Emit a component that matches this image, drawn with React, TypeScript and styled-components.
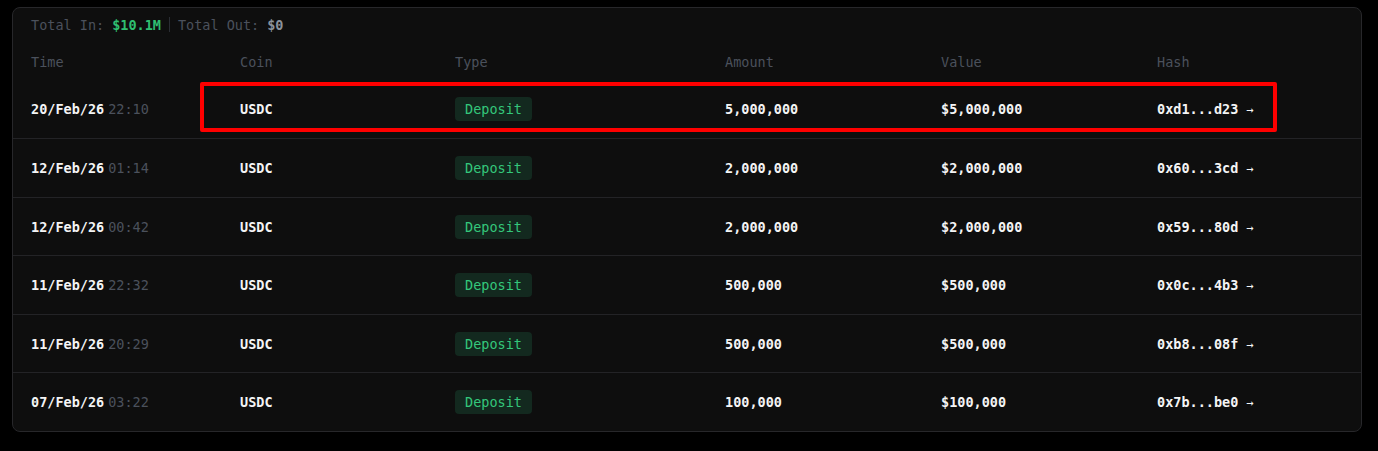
import React from "react";
import styled, { createGlobalStyle } from "styled-components";

const Global = createGlobalStyle`
  html, body { margin: 0; padding: 0; background: #000; }
  body { font-family: "DejaVu Sans Mono", "Liberation Mono", monospace; }
`;

const Page = styled.div`
  padding: 7px 16px 0 12px;
  width: 1378px;
  box-sizing: border-box;
`;

const Card = styled.div`
  position: relative;
  background: #0e0e0e;
  border: 1px solid #27272a;
  border-radius: 8px;
  overflow: hidden;
`;

const Summary = styled.div`
  display: flex;
  align-items: center;
  height: 33px;
  padding: 0 18px;
  font-size: 13.5px;
  color: #4b515c;
`;

const Strong = styled.span<{ $c: string }>`
  color: ${(p) => p.$c};
  font-weight: 700;
  margin-left: 8px;
`;

const Sep = styled.span`
  width: 1px;
  height: 15px;
  background: #2a2d33;
  margin: 0 8px;
`;

const Grid = styled.div`
  display: grid;
  grid-template-columns: 209px 215px 270px 216px 216px 1fr;
  padding: 0 18px;
  align-items: center;
  box-sizing: border-box;
`;

const HeadRow = styled(Grid)`
  height: 38.5px;
  padding-top: 3px;
  font-size: 13.5px;
  color: #4b515c;
`;

const Row = styled(Grid)<{ $first?: boolean }>`
  height: 58.5px;
  padding-top: 1px;
  border-top: ${(p) => (p.$first ? "none" : "1px solid #232326")};
  font-size: 13.5px;
  font-weight: 700;
  color: #f4f4f5;
`;

const Muted = styled.span`
  color: #4b515c;
  font-weight: 400;
  margin-left: 4px;
`;

const Badge = styled.span`
  display: inline-block;
  justify-self: start;
  background: #13291f;
  color: #34c77b;
  border-radius: 4px;
  padding: 0 10px;
  line-height: 24px;
  font-weight: 500;
`;

const Arrow = styled.span`
  font-size: 12px;
  margin-left: 8px;
  font-weight: 400;
`;

const Highlight = styled.div`
  position: absolute;
  left: 187px;
  top: 74px;
  width: 1077px;
  height: 50px;
  box-sizing: border-box;
  border: 4px solid #ff0000;
  border-radius: 2px;
  pointer-events: none;
`;

const rows = [
  ["20/Feb/26", "22:10", "5,000,000", "$5,000,000", "0xd1...d23"],
  ["12/Feb/26", "01:14", "2,000,000", "$2,000,000", "0x60...3cd"],
  ["12/Feb/26", "00:42", "2,000,000", "$2,000,000", "0x59...80d"],
  ["11/Feb/26", "22:32", "500,000", "$500,000", "0x0c...4b3"],
  ["11/Feb/26", "20:29", "500,000", "$500,000", "0xb8...08f"],
  ["07/Feb/26", "03:22", "100,000", "$100,000", "0x7b...be0"],
];

export default function App() {
  return (
    <Page>
      <Global />
      <Card>
        <Summary>
          Total In:<Strong $c="#2fbf71">$10.1M</Strong>
          <Sep />
          Total Out:<Strong $c="#8b929c">$0</Strong>
        </Summary>
        <HeadRow>
          <span>Time</span>
          <span>Coin</span>
          <span>Type</span>
          <span>Amount</span>
          <span>Value</span>
          <span>Hash</span>
        </HeadRow>
        {rows.map((r, i) => (
          <Row key={i} $first={i === 0}>
            <span>
              {r[0]}
              <Muted>{r[1]}</Muted>
            </span>
            <span>USDC</span>
            <Badge>Deposit</Badge>
            <span>{r[2]}</span>
            <span>{r[3]}</span>
            <span>
              {r[4]}
              <Arrow>→</Arrow>
            </span>
          </Row>
        ))}
        <Highlight />
      </Card>
    </Page>
  );
}
